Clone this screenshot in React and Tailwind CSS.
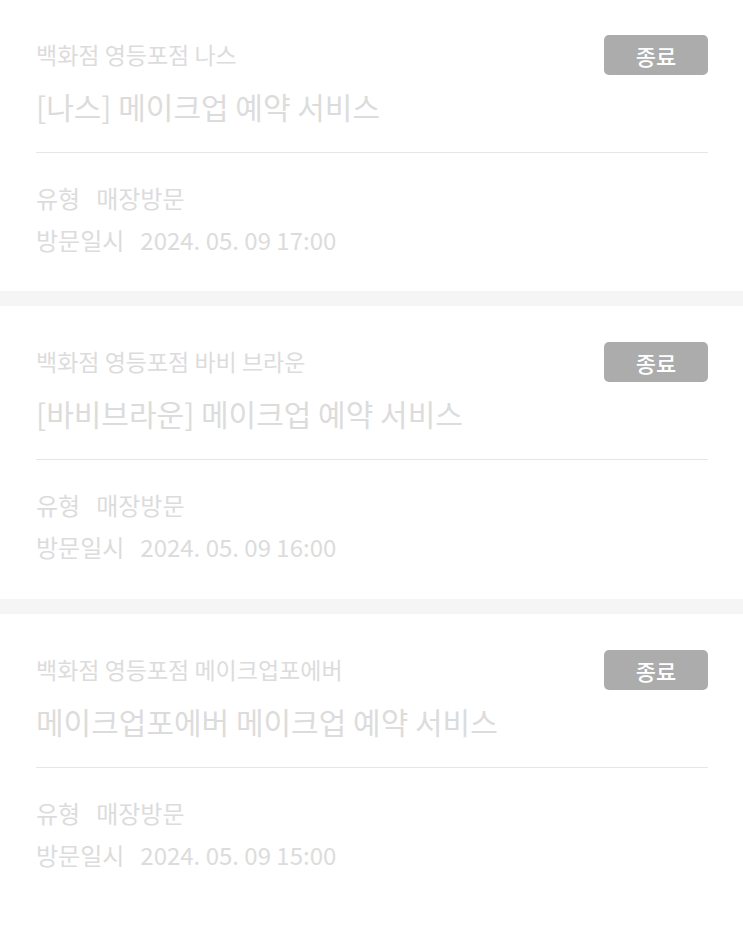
import React from 'react';

const reservations = [
  {
    id: 1,
    store: '백화점 영등포점 나스',
    title: '[나스] 메이크업 예약 서비스',
    type: '매장방문',
    visitedAt: '2024. 05. 09 17:00',
  },
  {
    id: 2,
    store: '백화점 영등포점 바비 브라운',
    title: '[바비브라운] 메이크업 예약 서비스',
    type: '매장방문',
    visitedAt: '2024. 05. 09 16:00',
  },
  {
    id: 3,
    store: '백화점 영등포점 메이크업포에버',
    title: '메이크업포에버 메이크업 예약 서비스',
    type: '매장방문',
    visitedAt: '2024. 05. 09 15:00',
  },
];

const InfoRow = ({ label, value }) => (
  <div className="flex gap-4 text-[24px] leading-[42px] text-[#dcdcdc]">
    <span>{label}</span>
    <span>{value}</span>
  </div>
);

// One finished (종료) reservation card
const ReservationCard = ({ item, first }) => (
  <div
    className={
      first
        ? 'bg-white pl-9 pr-[35px] pt-[35px] pb-[30px]'
        : 'bg-white pl-9 pr-[35px] pt-[36px] pb-[31px]'
    }
  >
    <div className="flex items-start justify-between border-b border-[#e6e6e6] pb-6">
      <div className="flex flex-col">
        <p className="text-[23px] leading-[38px] text-[#dcdcdc]">{item.store}</p>
        <p className="mt-[11px] text-[30px] leading-[44px] text-[#dcdcdc]">{item.title}</p>
      </div>
      <span className="flex h-10 w-[104px] items-center justify-center rounded-[5px] bg-[#acacac] text-[22px] font-medium text-white">
        종료
      </span>
    </div>
    <div className="pt-6">
      <InfoRow label="유형" value={item.type} />
      <InfoRow label="방문일시" value={item.visitedAt} />
    </div>
  </div>
);

export default function App() {
  return (
    <div
      className="min-h-screen w-full bg-white"
      style={{ fontFamily: '"Noto Sans CJK KR", "Noto Sans", sans-serif' }}
    >
      <div className="flex flex-col gap-[15px] bg-[#f5f5f5]">
        {reservations.map((item, idx) => (
          <ReservationCard key={item.id} item={item} first={idx === 0} />
        ))}
      </div>
    </div>
  );
}
